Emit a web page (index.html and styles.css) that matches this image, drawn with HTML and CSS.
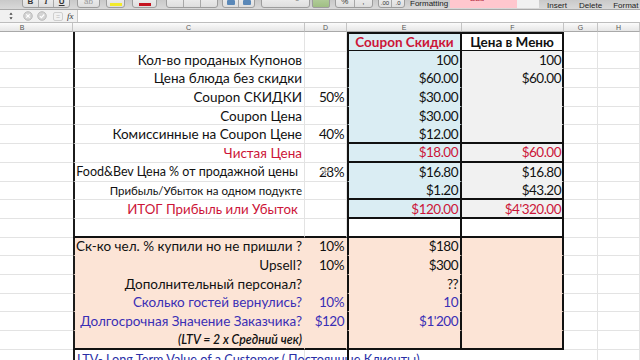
FILE: index.html
```html
<!DOCTYPE html>
<html lang="ru">
<head>
<meta charset="utf-8">
<title>Coupon</title>
<link rel="stylesheet" href="styles.css">
</head>
<body>
<div class="toolbar">
  <div class="btn seg biu"><span>B</span><span class="it">I</span><span class="ul">U</span></div>
  <div class="btn b2"><span class="faint">ab</span></div>
  <div class="btn hl"><i class="bar yellow"></i></div>
  <div class="btn fc"><i class="bar red"></i></div>
  <div class="btn seg al"><span></span><span></span><span></span></div>
  <div class="btn seg ind"><span><i class="blue-ic"></i></span><span><i class="blue-ic"></i></span></div>
  <div class="btn merge"><span class="mtxt">Merge</span></div>
  <div class="green"></div>
  <div class="btn seg pct"><span>%</span><span>,</span></div>
  <div class="btn seg dec"><span>.00</span><span>.0</span></div>
  <div class="cf">Conditional<br>Formatting</div>
  <div class="style-bad">Bad</div>
  <div class="style-w"></div>
  <div class="lbl l-ins">Insert</div>
  <div class="lbl l-del">Delete</div>
  <div class="lbl l-fmt">Format</div>
</div>

<div class="formula">
  <div class="fx-left">
    <svg class="stepper" width="4" height="8" viewBox="0 0 4 8"><path d="M2 0.5 L3.6 2.8 H0.4Z M2 7.5 L3.6 5.2 H0.4Z" fill="#444"/></svg>
    <svg class="circ" width="10" height="10" viewBox="0 0 10 10"><circle cx="5" cy="5" r="4.3" fill="#d4d4d4" stroke="#b0b0b0" stroke-width=".8"/><path d="M3.3 3.3 L6.7 6.7 M6.7 3.3 L3.3 6.7" stroke="#fff" stroke-width="1.2"/></svg>
    <svg class="circ" width="10" height="10" viewBox="0 0 10 10"><circle cx="5" cy="5" r="4.3" fill="#d4d4d4" stroke="#b0b0b0" stroke-width=".8"/><path d="M2.9 5.1 L4.4 6.6 L7.2 3.5" stroke="#fff" stroke-width="1.2" fill="none"/></svg>
    <span class="eqbox">=</span>
    <span class="fx">fx</span>
  </div>
  <div class="fx-input"></div>
</div>

<div class="colhead">
  <span class="ch-b">B</span><span>C</span><span>D</span><span>E</span><span>F</span><span>G</span><span>H</span>
</div>

<div class="sheet">
  <div class="row">
    <div class="cell b"></div><div class="cell c"></div><div class="cell d"></div>
    <div class="cell e blue top tb hd red-t">Coupon Скидки</div>
    <div class="cell f top tb hd">Цена в Меню</div>
    <div class="cell g"></div><div class="cell h"></div>
  </div>
  <div class="row">
    <div class="cell b"></div><div class="cell c">Кол-во проданых Купонов</div><div class="cell d"></div>
    <div class="cell e blue">100</div><div class="cell f gray">100</div>
    <div class="cell g"></div><div class="cell h"></div>
  </div>
  <div class="row">
    <div class="cell b"></div><div class="cell c">Цена блюда без скидки</div><div class="cell d"></div>
    <div class="cell e blue">$60.00</div><div class="cell f gray">$60.00</div>
    <div class="cell g"></div><div class="cell h"></div>
  </div>
  <div class="row">
    <div class="cell b"></div><div class="cell c">Coupon СКИДКИ</div><div class="cell d">50%</div>
    <div class="cell e blue">$30.00</div><div class="cell f gray"></div>
    <div class="cell g"></div><div class="cell h"></div>
  </div>
  <div class="row">
    <div class="cell b"></div><div class="cell c">Coupon Цена</div><div class="cell d"></div>
    <div class="cell e blue">$30.00</div><div class="cell f gray"></div>
    <div class="cell g"></div><div class="cell h"></div>
  </div>
  <div class="row">
    <div class="cell b"></div><div class="cell c">Комиссинные на Coupon Цене</div><div class="cell d">40%</div>
    <div class="cell e blue tb">$12.00</div><div class="cell f gray tb"></div>
    <div class="cell g"></div><div class="cell h"></div>
  </div>
  <div class="row">
    <div class="cell b"></div><div class="cell c red-t">Чистая Цена</div><div class="cell d"></div>
    <div class="cell e blue tb red-t">$18.00</div><div class="cell f gray tb red-t">$60.00</div>
    <div class="cell g"></div><div class="cell h"></div>
  </div>
  <div class="row">
    <div class="cell b"></div><div class="cell c small1">Food&amp;Bev Цена % от продажной цены</div>
    <div class="cell d cursor-cell">28%
      <svg class="move-cursor" width="9" height="9" viewBox="0 0 9 9"><path d="M4.5 0.3 L6 2 H5 V4 H7 V3 L8.7 4.5 L7 6 V5 H5 V7 H6 L4.5 8.7 L3 7 H4 V5 H2 V6 L0.3 4.5 L2 3 V4 H4 V2 H3Z" fill="#8a8a8a" stroke="#fff" stroke-width=".4"/></svg>
    </div>
    <div class="cell e blue">$16.80</div><div class="cell f gray">$16.80</div>
    <div class="cell g"></div><div class="cell h"></div>
  </div>
  <div class="row">
    <div class="cell b"></div><div class="cell c small2">Прибыль/Убыток на одном подукте</div><div class="cell d"></div>
    <div class="cell e blue tb">$1.20</div><div class="cell f gray tb">$43.20</div>
    <div class="cell g"></div><div class="cell h"></div>
  </div>
  <div class="row">
    <div class="cell b"></div><div class="cell c red-t big">ИТОГ Прибыль или Убыток</div><div class="cell d"></div>
    <div class="cell e blue tb red-t">$120.00</div><div class="cell f gray tb red-t">$4'320.00</div>
    <div class="cell g"></div><div class="cell h"></div>
  </div>
  <div class="row">
    <div class="cell b"></div><div class="cell c tb"></div><div class="cell d tb"></div>
    <div class="cell e tb"></div><div class="cell f tb"></div>
    <div class="cell g"></div><div class="cell h"></div>
  </div>
  <div class="row">
    <div class="cell b"></div><div class="cell c peach">Ск-ко чел. % купили но не пришли ?</div><div class="cell d peach">10%</div>
    <div class="cell e peach">$180</div><div class="cell f peach"></div>
    <div class="cell g"></div><div class="cell h"></div>
  </div>
  <div class="row">
    <div class="cell b"></div><div class="cell c peach">Upsell?</div><div class="cell d peach">10%</div>
    <div class="cell e peach">$300</div><div class="cell f peach"></div>
    <div class="cell g"></div><div class="cell h"></div>
  </div>
  <div class="row">
    <div class="cell b"></div><div class="cell c peach">Дополнительный персонал?</div><div class="cell d peach"></div>
    <div class="cell e peach">??</div><div class="cell f peach"></div>
    <div class="cell g"></div><div class="cell h"></div>
  </div>
  <div class="row">
    <div class="cell b"></div><div class="cell c peach blue-t">Сколько гостей вернулись?</div><div class="cell d peach blue-t">10%</div>
    <div class="cell e peach blue-t">10</div><div class="cell f peach"></div>
    <div class="cell g"></div><div class="cell h"></div>
  </div>
  <div class="row">
    <div class="cell b"></div><div class="cell c peach blue-t">Долгосрочная Значение Заказчика?</div><div class="cell d peach blue-t">$120</div>
    <div class="cell e peach blue-t">$1'200</div><div class="cell f peach"></div>
    <div class="cell g"></div><div class="cell h"></div>
  </div>
  <div class="row">
    <div class="cell b"></div><div class="cell c peach tb note">(LTV = 2 x Средний чек)</div><div class="cell d peach tb"></div>
    <div class="cell e peach tb"></div><div class="cell f peach tb"></div>
    <div class="cell g"></div><div class="cell h"></div>
  </div>
  <div class="row">
    <div class="cell b"></div><div class="cell c link">LTV- Long Term Value of a Customer ( Постоянные Клиенты)</div><div class="cell d plain"></div>
    <div class="cell e plain"></div><div class="cell f plain"></div>
    <div class="cell g"></div><div class="cell h"></div>
  </div>
</div>
</body>
</html>
```

FILE: styles.css
```css
:root {
  --cols: 73px 232px 42px 115px 102px 34px 42px;
  --ink: #111;
  --red: #cc1538;
  --blue: #3a2fb5;
}

* { box-sizing: border-box; }

body {
  margin: 0;
  width: 640px;
  height: 360px;
  overflow: hidden;
  background: #fff;
  font-family: Lato, "Noto Sans", "DejaVu Sans", sans-serif;
}

/* ---------- toolbar ---------- */
.toolbar {
  height: 10px;
  display: flex;
  align-items: flex-end;
  overflow: hidden;
  background: linear-gradient(#c9c9c9, #d9d9d9);
  border-bottom: 1px solid #a9a9a9;
}

.btn {
  height: 16px;
  margin-bottom: 1px;
  flex: none;
  display: flex;
  align-items: flex-end;
  justify-content: center;
  background: linear-gradient(#f6f6f6, #dedede);
  border: 1px solid #9d9d9d;
  border-radius: 3px;
  font: bold 8px "Liberation Sans", sans-serif;
  color: #333;
  position: relative;
}

.seg span {
  flex: 1;
  height: 100%;
  display: flex;
  align-items: flex-end;
  justify-content: center;
  padding-bottom: 1px;
  border-right: 1px solid #a8a8a8;
}
.seg span:last-child { border-right: none; }

.biu { width: 48px; margin-left: 22px; }
.biu .it { font-style: italic; font-family: "Liberation Serif", serif; }
.biu .ul { text-decoration: underline; }
.b2 { width: 23px; margin-left: 7px; }
.faint { color: #999; font-weight: normal; padding-bottom: 1px; }
.hl { width: 19px; margin-left: 6px; }
.fc { width: 25px; margin-left: 7px; }
.bar { display: block; height: 3px; width: 12px; margin-bottom: 1px; }
.yellow { background: #f2ea2a; }
.red { background: #c4131f; }
.al { width: 52px; margin-left: 9px; }
.ind { width: 33px; margin-left: 4px; }
.blue-ic {
  display: block;
  width: 8px;
  height: 5px;
  margin-bottom: 1px;
  background: #5a88b8;
  border-radius: 1px;
}
.merge { width: 49px; margin-left: 6px; justify-content: flex-end; padding-right: 5px; }
.mtxt { font-weight: normal; color: #8a8a8a; padding-bottom: 6px; }
.green {
  width: 18px;
  height: 14px;
  margin: 0 0 1px 2px;
  flex: none;
  background: linear-gradient(#bcd3a6, #9fbf83);
  border: 1px solid #9d9d9d;
  border-radius: 2px;
}
.pct { width: 38px; margin-left: 5px; font-weight: normal; }
.dec { width: 27px; margin-left: 5px; font-weight: normal; font-size: 6px; }
.cf {
  width: 38px;
  margin: 0 0 1px 5px;
  flex: none;
  font: 8px/9px "Liberation Sans", sans-serif;
  color: #222;
  text-align: center;
}
.style-bad {
  width: 67px;
  height: 16px;
  margin: 0 0 1px 2px;
  flex: none;
  background: #ffc7ce;
  color: #b3263a;
  font: 8px "Liberation Sans", sans-serif;
  padding: 2px 0 0 20px;
}
.style-w {
  width: 22px;
  height: 16px;
  margin-bottom: 1px;
  flex: none;
  background: #f1f1f1;
}
.lbl {
  align-self: center;
  flex: none;
  font: 8px "Liberation Sans", sans-serif;
  color: #222;
  padding-top: 1px;
}
.l-ins { margin-left: 8px; }
.l-del { margin-left: 12px; }
.l-fmt { margin-left: 11px; }

/* ---------- formula bar ---------- */
.formula {
  height: 13px;
  display: flex;
  border-bottom: 1px solid #bdbdbd;
  background: #fff;
}
.fx-left {
  width: 78px;
  flex: none;
  display: flex;
  align-items: center;
  background: #f1f1f1;
  border-right: 1px solid #c9c9c9;
}
.stepper { margin-left: 9px; }
.circ { margin-left: 10px; }
.circ + .circ { margin-left: 4px; }
.eqbox {
  margin-left: 6px;
  width: 10px;
  height: 9px;
  border: 1px solid #cfcfcf;
  border-radius: 2px;
  font: 7px/7px "Liberation Sans", sans-serif;
  color: #bbb;
  text-align: center;
}
.fx {
  margin-left: 4px;
  font: italic 9px "Liberation Serif", serif;
  color: #333;
}
.fx-input { flex: 1; }

/* ---------- column header ---------- */
.colhead {
  display: grid;
  grid-template-columns: var(--cols);
  height: 9px;
}
.colhead span {
  display: flex;
  align-items: center;
  justify-content: center;
  font: 7px "Liberation Sans", sans-serif;
  color: #555;
  background: linear-gradient(#fbfbfb, #e6e6e6);
  border-right: 1px solid #c4c4c4;
  border-bottom: 1px solid #a9a9a9;
}
.colhead .ch-b { padding-right: 28px; }

/* ---------- sheet ---------- */
.row {
  display: grid;
  grid-template-columns: var(--cols);
  height: 18.7px;
}

.cell {
  display: flex;
  align-items: center;
  justify-content: flex-end;
  min-width: 0;
  white-space: nowrap;
  padding-right: 2px;
  font-size: 13.5px;
  color: var(--ink);
  border-right: 1px solid #e3e3e3;
  border-bottom: 1px solid #e3e3e3;
}
.b { border-right: none; }
.c { border-left: 2px solid #1b1b1b; }
.d, .e, .f { letter-spacing: -0.5px; }
.e { border-left: 2px solid var(--ink); border-right: 2px solid var(--ink); }
.f { border-right: 2px solid var(--ink); padding-right: 1px; }

.blue { background: #daedf3; border-bottom-color: transparent; }
.gray { background: #f1f1f1; border-bottom-color: transparent; }
.peach { background: #fce4d6; border-bottom-color: transparent; }
.c.peach, .d.peach { border-right-color: transparent; }

.top { border-top: 2px solid var(--ink); }
.tb { border-bottom: 2px solid var(--ink); }

.hd { justify-content: center; font-weight: bold; padding-right: 0; letter-spacing: 0; }
.red-t { color: var(--red); }
.blue-t { color: var(--blue); }

.small1 { font-size: 12.5px; padding-right: 6px; }
.small2 { font-size: 11.5px; }
.big { font-size: 13.3px; padding-right: 6px; }
.note { font-size: 12.3px; font-style: italic; font-weight: 600; }

.link {
  justify-content: flex-start;
  padding-left: 2px;
  overflow: visible;
  font-size: 12.7px;
  color: #2a2fa6;
  text-decoration: underline;
}
.plain { border-right-color: transparent; }

.cursor-cell { position: relative; }
.move-cursor { position: absolute; left: 16px; top: 4px; }
```
